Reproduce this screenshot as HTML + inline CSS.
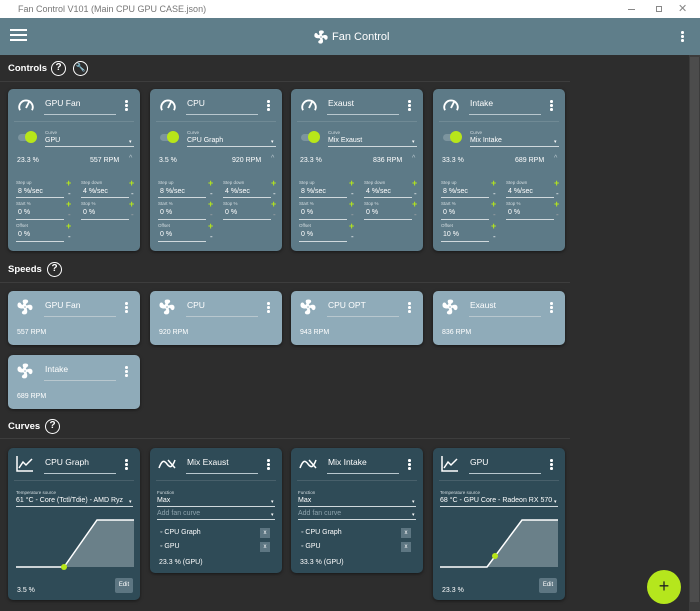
<!DOCTYPE html><html><head><meta charset="utf-8"><style>
*{margin:0;padding:0;box-sizing:border-box}
body{width:700px;height:611px;overflow:hidden;background:#2d2d2d;font-family:"Liberation Sans",sans-serif;color:#fff;position:relative}
.a{position:absolute}
.tb{left:0;top:0;width:700px;height:18px;background:#fff;color:#777;font-size:9px;line-height:18px;padding-left:18px}
.ab{left:0;top:18px;width:700px;height:37px;background:#5f7e8a}
.sb{left:689px;top:55px;width:11px;height:556px;background:#3c3c3c}
.sec{font-size:9.5px;font-weight:bold}
.hl{height:1px;background:#3d3d3d;left:0;width:570px}
.q{width:15px;height:15px;border:1.5px solid #fff;border-radius:50%;font-size:10px;text-align:center;line-height:12px;font-weight:bold}
.card{border-radius:5px;box-shadow:0 1px 3px rgba(0,0,0,.5)}
.c1{background:#5d7a87;width:132px;height:162px}
.c2{background:#8fabb9;width:132px;height:54px}
.c3{background:#2f4b57;width:132px}
.t{font-size:8.5px;left:37px;top:9px}
.ul{height:1px;background:#b8c7ce;left:36px;width:72px;top:25px}
.dots{left:117px;top:11px;width:3px;font-size:0}
.dots i{display:block;width:2.5px;height:2.5px;background:#fff;border-radius:50%;margin-bottom:1.5px}
.sep{left:6px;right:6px;height:1px;background:rgba(255,255,255,.12);top:32px}
.lb{font-size:4.5px;color:#d5dee2}
.v{font-size:7px}
.ln{height:1px;background:#d0d9dd}
.pl{color:#b4e61c;font-size:9px;font-weight:bold;line-height:9px}
.mn{font-size:8px;line-height:8px}
</style></head><body>
<div class="a tb">Fan Control V101 (Main CPU GPU CASE.json)</div>
<div class="a" style="left:656px;top:6px;width:6px;height:6px;border:1px solid #888"></div>
<div class="a" style="left:628px;top:9px;width:7px;height:1px;background:#888"></div>
<div class="a" style="left:678px;top:2px;font-size:11px;color:#888">✕</div>
<div class="a ab"></div>
<div class="a" style="left:10px;top:29px;width:17px;height:2px;background:#fff;box-shadow:0 5px 0 #fff,0 10px 0 #fff"></div>
<svg class="a" style="left:313px;top:29px" width="16" height="16" viewBox="0 0 24 24"><path fill="#fff" d="M12 11a1 1 0 1 0 0 2 1 1 0 0 0 0-2m.5-9c4.5 0 4.6 3.6 2.2 4.8-1 .5-1.4 1.4-1.6 2.3.5.2.9.5 1.2.9 3.7-2 7.7-1.2 7.7 2.4 0 4.5-3.6 4.6-4.8 2.2-.5-1-1.4-1.4-2.3-1.6-.2.5-.5.9-.9 1.2 2 3.7 1.2 7.7-2.4 7.7-4.5 0-4.6-3.6-2.2-4.8 1-.5 1.4-1.4 1.5-2.3-.5-.2-.9-.5-1.2-.9C6 14.2 2 13.4 2 9.8 2 5.3 5.6 5.2 6.8 7.6c.5 1 1.4 1.4 2.3 1.5.2-.5.5-.9.9-1.2C8 4.2 8.8 2 12.5 2z"/></svg>
<div class="a" style="left:332px;top:31px;font-size:11px">Fan Control</div>
<div class="a dots" style="left:681px;top:31px"><i></i><i></i><i></i></div>
<div class="a sb"></div>
<div class="a" style="left:690px;top:57px;width:9px;height:545px;background:#4c4c4c"></div>

<div class="a sec" style="left:8px;top:63px">Controls</div>
<div class="a q" style="left:51px;top:61px">?</div>
<div class="a q" style="left:73px;top:61px;font-size:8px">🔧</div>
<div class="a hl" style="top:81px"></div>
<div class="a sec" style="left:8px;top:264px">Speeds</div>
<div class="a q" style="left:47px;top:262px">?</div>
<div class="a hl" style="top:282px"></div>
<div class="a sec" style="left:8px;top:421px">Curves</div>
<div class="a q" style="left:45px;top:419px">?</div>
<div class="a hl" style="top:438px"></div>

<!-- card 1 -->
<div class="a card c1" style="left:8px;top:89px">
 <svg class="a" style="left:9px;top:8px" width="18" height="16" viewBox="0 0 24 20"><path d="M4 17A9 9 0 1 1 20 17" fill="none" stroke="#fff" stroke-width="2.5"/><path d="M12 14L16 6" stroke="#fff" stroke-width="2.5"/></svg>
 <div class="a t">GPU Fan</div><div class="a ul"></div><div class="a dots"><i></i><i></i><i></i></div><div class="a sep"></div>
 <div class="a" style="left:10px;top:45px;width:14px;height:7px;border-radius:4px;background:#7c949e"></div><div class="a" style="left:17px;top:42px;width:12px;height:12px;border-radius:50%;background:#b8e61a"></div>
 <div class="a lb" style="left:37px;top:41px">Curve</div><div class="a v" style="left:37px;top:48px">GPU</div><div class="a ln" style="left:37px;top:57px;width:89px"></div><div class="a" style="left:121px;top:50px;font-size:5px">▾</div>
 <div class="a v" style="left:9px;top:68px">23.3 %</div><div class="a v" style="left:82px;top:68px">557 RPM</div><div class="a v" style="left:121px;top:66px;color:#b8c7ce">^</div>
 <div class="a lb" style="left:8px;top:91px">Step up</div><div class="a pl" style="left:58px;top:90px">+</div><div class="a v" style="left:10px;top:99px">8 %/sec</div><div class="a mn" style="left:60px;top:101px">-</div><div class="a ln" style="left:8px;top:108px;width:48px"></div>
 <div class="a lb" style="left:73px;top:91px">Step down</div><div class="a pl" style="left:121px;top:90px">+</div><div class="a v" style="left:75px;top:99px">4 %/sec</div><div class="a mn" style="left:123px;top:101px">-</div><div class="a ln" style="left:73px;top:108px;width:48px"></div>
 <div class="a lb" style="left:8px;top:112px">Start %</div><div class="a pl" style="left:58px;top:111px">+</div><div class="a v" style="left:10px;top:120px">0 %</div><div class="a mn" style="left:60px;top:122px;color:#aaa">-</div><div class="a ln" style="left:8px;top:130px;width:48px"></div>
 <div class="a lb" style="left:73px;top:112px">Stop %</div><div class="a pl" style="left:121px;top:111px">+</div><div class="a v" style="left:75px;top:120px">0 %</div><div class="a mn" style="left:123px;top:122px;color:#aaa">-</div><div class="a ln" style="left:73px;top:130px;width:48px"></div>
 <div class="a lb" style="left:8px;top:134px">Offset</div><div class="a pl" style="left:58px;top:133px">+</div><div class="a v" style="left:10px;top:142px">0 %</div><div class="a mn" style="left:60px;top:144px">-</div><div class="a ln" style="left:8px;top:152px;width:48px"></div>
</div>
<!-- card 2 -->
<div class="a card c1" style="left:150px;top:89px">
 <svg class="a" style="left:9px;top:8px" width="18" height="16" viewBox="0 0 24 20"><path d="M4 17A9 9 0 1 1 20 17" fill="none" stroke="#fff" stroke-width="2.5"/><path d="M12 14L16 6" stroke="#fff" stroke-width="2.5"/></svg>
 <div class="a t">CPU</div><div class="a ul"></div><div class="a dots"><i></i><i></i><i></i></div><div class="a sep"></div>
 <div class="a" style="left:10px;top:45px;width:14px;height:7px;border-radius:4px;background:#7c949e"></div><div class="a" style="left:17px;top:42px;width:12px;height:12px;border-radius:50%;background:#b8e61a"></div>
 <div class="a lb" style="left:37px;top:41px">Curve</div><div class="a v" style="left:37px;top:48px">CPU Graph</div><div class="a ln" style="left:37px;top:57px;width:89px"></div><div class="a" style="left:121px;top:50px;font-size:5px">▾</div>
 <div class="a v" style="left:9px;top:68px">3.5 %</div><div class="a v" style="left:82px;top:68px">920 RPM</div><div class="a v" style="left:121px;top:66px;color:#b8c7ce">^</div>
 <div class="a lb" style="left:8px;top:91px">Step up</div><div class="a pl" style="left:58px;top:90px">+</div><div class="a v" style="left:10px;top:99px">8 %/sec</div><div class="a mn" style="left:60px;top:101px">-</div><div class="a ln" style="left:8px;top:108px;width:48px"></div>
 <div class="a lb" style="left:73px;top:91px">Step down</div><div class="a pl" style="left:121px;top:90px">+</div><div class="a v" style="left:75px;top:99px">4 %/sec</div><div class="a mn" style="left:123px;top:101px">-</div><div class="a ln" style="left:73px;top:108px;width:48px"></div>
 <div class="a lb" style="left:8px;top:112px">Start %</div><div class="a pl" style="left:58px;top:111px">+</div><div class="a v" style="left:10px;top:120px">0 %</div><div class="a mn" style="left:60px;top:122px;color:#aaa">-</div><div class="a ln" style="left:8px;top:130px;width:48px"></div>
 <div class="a lb" style="left:73px;top:112px">Stop %</div><div class="a pl" style="left:121px;top:111px">+</div><div class="a v" style="left:75px;top:120px">0 %</div><div class="a mn" style="left:123px;top:122px;color:#aaa">-</div><div class="a ln" style="left:73px;top:130px;width:48px"></div>
 <div class="a lb" style="left:8px;top:134px">Offset</div><div class="a pl" style="left:58px;top:133px">+</div><div class="a v" style="left:10px;top:142px">0 %</div><div class="a mn" style="left:60px;top:144px">-</div><div class="a ln" style="left:8px;top:152px;width:48px"></div>
</div>
<!-- card 3 -->
<div class="a card c1" style="left:291px;top:89px">
 <svg class="a" style="left:9px;top:8px" width="18" height="16" viewBox="0 0 24 20"><path d="M4 17A9 9 0 1 1 20 17" fill="none" stroke="#fff" stroke-width="2.5"/><path d="M12 14L16 6" stroke="#fff" stroke-width="2.5"/></svg>
 <div class="a t">Exaust</div><div class="a ul"></div><div class="a dots"><i></i><i></i><i></i></div><div class="a sep"></div>
 <div class="a" style="left:10px;top:45px;width:14px;height:7px;border-radius:4px;background:#7c949e"></div><div class="a" style="left:17px;top:42px;width:12px;height:12px;border-radius:50%;background:#b8e61a"></div>
 <div class="a lb" style="left:37px;top:41px">Curve</div><div class="a v" style="left:37px;top:48px">Mix Exaust</div><div class="a ln" style="left:37px;top:57px;width:89px"></div><div class="a" style="left:121px;top:50px;font-size:5px">▾</div>
 <div class="a v" style="left:9px;top:68px">23.3 %</div><div class="a v" style="left:82px;top:68px">836 RPM</div><div class="a v" style="left:121px;top:66px;color:#b8c7ce">^</div>
 <div class="a lb" style="left:8px;top:91px">Step up</div><div class="a pl" style="left:58px;top:90px">+</div><div class="a v" style="left:10px;top:99px">8 %/sec</div><div class="a mn" style="left:60px;top:101px">-</div><div class="a ln" style="left:8px;top:108px;width:48px"></div>
 <div class="a lb" style="left:73px;top:91px">Step down</div><div class="a pl" style="left:121px;top:90px">+</div><div class="a v" style="left:75px;top:99px">4 %/sec</div><div class="a mn" style="left:123px;top:101px">-</div><div class="a ln" style="left:73px;top:108px;width:48px"></div>
 <div class="a lb" style="left:8px;top:112px">Start %</div><div class="a pl" style="left:58px;top:111px">+</div><div class="a v" style="left:10px;top:120px">0 %</div><div class="a mn" style="left:60px;top:122px;color:#aaa">-</div><div class="a ln" style="left:8px;top:130px;width:48px"></div>
 <div class="a lb" style="left:73px;top:112px">Stop %</div><div class="a pl" style="left:121px;top:111px">+</div><div class="a v" style="left:75px;top:120px">0 %</div><div class="a mn" style="left:123px;top:122px;color:#aaa">-</div><div class="a ln" style="left:73px;top:130px;width:48px"></div>
 <div class="a lb" style="left:8px;top:134px">Offset</div><div class="a pl" style="left:58px;top:133px">+</div><div class="a v" style="left:10px;top:142px">0 %</div><div class="a mn" style="left:60px;top:144px">-</div><div class="a ln" style="left:8px;top:152px;width:48px"></div>
</div>
<!-- card 4 -->
<div class="a card c1" style="left:433px;top:89px">
 <svg class="a" style="left:9px;top:8px" width="18" height="16" viewBox="0 0 24 20"><path d="M4 17A9 9 0 1 1 20 17" fill="none" stroke="#fff" stroke-width="2.5"/><path d="M12 14L16 6" stroke="#fff" stroke-width="2.5"/></svg>
 <div class="a t">Intake</div><div class="a ul"></div><div class="a dots"><i></i><i></i><i></i></div><div class="a sep"></div>
 <div class="a" style="left:10px;top:45px;width:14px;height:7px;border-radius:4px;background:#7c949e"></div><div class="a" style="left:17px;top:42px;width:12px;height:12px;border-radius:50%;background:#b8e61a"></div>
 <div class="a lb" style="left:37px;top:41px">Curve</div><div class="a v" style="left:37px;top:48px">Mix Intake</div><div class="a ln" style="left:37px;top:57px;width:89px"></div><div class="a" style="left:121px;top:50px;font-size:5px">▾</div>
 <div class="a v" style="left:9px;top:68px">33.3 %</div><div class="a v" style="left:82px;top:68px">689 RPM</div><div class="a v" style="left:121px;top:66px;color:#b8c7ce">^</div>
 <div class="a lb" style="left:8px;top:91px">Step up</div><div class="a pl" style="left:58px;top:90px">+</div><div class="a v" style="left:10px;top:99px">8 %/sec</div><div class="a mn" style="left:60px;top:101px">-</div><div class="a ln" style="left:8px;top:108px;width:48px"></div>
 <div class="a lb" style="left:73px;top:91px">Step down</div><div class="a pl" style="left:121px;top:90px">+</div><div class="a v" style="left:75px;top:99px">4 %/sec</div><div class="a mn" style="left:123px;top:101px">-</div><div class="a ln" style="left:73px;top:108px;width:48px"></div>
 <div class="a lb" style="left:8px;top:112px">Start %</div><div class="a pl" style="left:58px;top:111px">+</div><div class="a v" style="left:10px;top:120px">0 %</div><div class="a mn" style="left:60px;top:122px;color:#aaa">-</div><div class="a ln" style="left:8px;top:130px;width:48px"></div>
 <div class="a lb" style="left:73px;top:112px">Stop %</div><div class="a pl" style="left:121px;top:111px">+</div><div class="a v" style="left:75px;top:120px">0 %</div><div class="a mn" style="left:123px;top:122px;color:#aaa">-</div><div class="a ln" style="left:73px;top:130px;width:48px"></div>
 <div class="a lb" style="left:8px;top:134px">Offset</div><div class="a pl" style="left:58px;top:133px">+</div><div class="a v" style="left:10px;top:142px">10 %</div><div class="a mn" style="left:60px;top:144px">-</div><div class="a ln" style="left:8px;top:152px;width:48px"></div>
</div>

<!-- speeds -->
<svg width="0" height="0" style="position:absolute"><defs><path id="fan" fill="#fff" d="M12 11a1 1 0 1 0 0 2 1 1 0 0 0 0-2m.5-9c4.5 0 4.6 3.6 2.2 4.8-1 .5-1.4 1.4-1.6 2.3.5.2.9.5 1.2.9 3.7-2 7.7-1.2 7.7 2.4 0 4.5-3.6 4.6-4.8 2.2-.5-1-1.4-1.4-2.3-1.6-.2.5-.5.9-.9 1.2 2 3.7 1.2 7.7-2.4 7.7-4.5 0-4.6-3.6-2.2-4.8 1-.5 1.4-1.4 1.5-2.3-.5-.2-.9-.5-1.2-.9C6 14.2 2 13.4 2 9.8 2 5.3 5.6 5.2 6.8 7.6c.5 1 1.4 1.4 2.3 1.5.2-.5.5-.9.9-1.2C8 4.2 8.8 2 12.5 2z"/></defs></svg>
<div class="a card c2" style="left:8px;top:291px"><svg class="a" style="left:8px;top:7px" width="18" height="18" viewBox="0 0 24 24"><use href="#fan"/></svg><div class="a t">GPU Fan</div><div class="a ul"></div><div class="a dots"><i></i><i></i><i></i></div><div class="a v" style="left:9px;top:38px">557 RPM</div></div>
<div class="a card c2" style="left:150px;top:291px"><svg class="a" style="left:8px;top:7px" width="18" height="18" viewBox="0 0 24 24"><use href="#fan"/></svg><div class="a t">CPU</div><div class="a ul"></div><div class="a dots"><i></i><i></i><i></i></div><div class="a v" style="left:9px;top:38px">920 RPM</div></div>
<div class="a card c2" style="left:291px;top:291px"><svg class="a" style="left:8px;top:7px" width="18" height="18" viewBox="0 0 24 24"><use href="#fan"/></svg><div class="a t">CPU OPT</div><div class="a ul"></div><div class="a dots"><i></i><i></i><i></i></div><div class="a v" style="left:9px;top:38px">943 RPM</div></div>
<div class="a card c2" style="left:433px;top:291px"><svg class="a" style="left:8px;top:7px" width="18" height="18" viewBox="0 0 24 24"><use href="#fan"/></svg><div class="a t">Exaust</div><div class="a ul"></div><div class="a dots"><i></i><i></i><i></i></div><div class="a v" style="left:9px;top:38px">836 RPM</div></div>
<div class="a card c2" style="left:8px;top:355px"><svg class="a" style="left:8px;top:7px" width="18" height="18" viewBox="0 0 24 24"><use href="#fan"/></svg><div class="a t">Intake</div><div class="a ul"></div><div class="a dots"><i></i><i></i><i></i></div><div class="a v" style="left:9px;top:38px">689 RPM</div></div>

<!-- curves -->
<div class="a card c3" style="left:8px;top:448px;height:152px">
 <svg class="a" style="left:8px;top:8px" width="18" height="16" viewBox="0 0 18 16"><path d="M1 0V15H17M3 12L7 6 10 9 16 3" fill="none" stroke="#fff" stroke-width="1.5"/></svg>
 <div class="a t">CPU Graph</div><div class="a ul"></div><div class="a dots"><i></i><i></i><i></i></div><div class="a sep"></div>
 <div class="a lb" style="left:8px;top:42px">Temperature source</div><div class="a v" style="left:8px;top:49px">61 °C - Core (Tctl/Tdie) - AMD Ryz</div><div class="a" style="left:121px;top:51px;font-size:5px">▾</div><div class="a ln" style="left:8px;top:58px;width:117px"></div>
 <svg class="a" style="left:8px;top:60px" width="118" height="62"><path d="M48 59L81 12H118V59Z" fill="#6a8089"/><path d="M0 59H48L81 12H118" fill="none" stroke="#fff" stroke-width="1.5"/><circle cx="48" cy="59" r="3" fill="#b8e61a"/></svg>
 <div class="a v" style="left:9px;top:139px">3.5 %</div>
 <div class="a" style="left:107px;top:130px;width:18px;height:15px;background:#5d7682;border-radius:2px;font-size:6px;text-align:center;line-height:15px">Edit</div>
</div>
<div class="a card c3" style="left:150px;top:448px;height:125px">
 <svg class="a" style="left:8px;top:10px" width="18" height="12" viewBox="0 0 18 12"><path d="M1 10C4 2 6 2 9 6S14 10 17 2M10 2L17 10" fill="none" stroke="#fff" stroke-width="1.5"/></svg>
 <div class="a t">Mix Exaust</div><div class="a ul"></div><div class="a dots"><i></i><i></i><i></i></div><div class="a sep"></div>
 <div class="a lb" style="left:7px;top:42px">Function</div><div class="a v" style="left:7px;top:49px">Max</div><div class="a" style="left:121px;top:51px;font-size:5px">▾</div><div class="a ln" style="left:7px;top:58px;width:118px"></div>
 <div class="a v" style="left:7px;top:62px;color:#8da3ad">Add fan curve</div><div class="a" style="left:121px;top:64px;font-size:5px">▾</div><div class="a ln" style="left:7px;top:71px;width:118px"></div>
 <div class="a v" style="left:10px;top:81px">◦ CPU Graph</div><div class="a" style="left:110px;top:80px;width:10px;height:10px;background:#5d7682;font-size:6px;text-align:center;line-height:10px">x</div>
 <div class="a v" style="left:10px;top:95px">◦ GPU</div><div class="a" style="left:110px;top:94px;width:10px;height:10px;background:#5d7682;font-size:6px;text-align:center;line-height:10px">x</div>
 <div class="a v" style="left:9px;top:111px">23.3 % (GPU)</div>
</div>
<div class="a card c3" style="left:291px;top:448px;height:125px">
 <svg class="a" style="left:8px;top:10px" width="18" height="12" viewBox="0 0 18 12"><path d="M1 10C4 2 6 2 9 6S14 10 17 2M10 2L17 10" fill="none" stroke="#fff" stroke-width="1.5"/></svg>
 <div class="a t">Mix Intake</div><div class="a ul"></div><div class="a dots"><i></i><i></i><i></i></div><div class="a sep"></div>
 <div class="a lb" style="left:7px;top:42px">Function</div><div class="a v" style="left:7px;top:49px">Max</div><div class="a" style="left:121px;top:51px;font-size:5px">▾</div><div class="a ln" style="left:7px;top:58px;width:118px"></div>
 <div class="a v" style="left:7px;top:62px;color:#8da3ad">Add fan curve</div><div class="a" style="left:121px;top:64px;font-size:5px">▾</div><div class="a ln" style="left:7px;top:71px;width:118px"></div>
 <div class="a v" style="left:10px;top:81px">◦ CPU Graph</div><div class="a" style="left:110px;top:80px;width:10px;height:10px;background:#5d7682;font-size:6px;text-align:center;line-height:10px">x</div>
 <div class="a v" style="left:10px;top:95px">◦ GPU</div><div class="a" style="left:110px;top:94px;width:10px;height:10px;background:#5d7682;font-size:6px;text-align:center;line-height:10px">x</div>
 <div class="a v" style="left:9px;top:111px">33.3 % (GPU)</div>
</div>
<div class="a card c3" style="left:433px;top:448px;height:152px">
 <svg class="a" style="left:8px;top:8px" width="18" height="16" viewBox="0 0 18 16"><path d="M1 0V15H17M3 12L7 6 10 9 16 3" fill="none" stroke="#fff" stroke-width="1.5"/></svg>
 <div class="a t">GPU</div><div class="a ul"></div><div class="a dots"><i></i><i></i><i></i></div><div class="a sep"></div>
 <div class="a lb" style="left:7px;top:42px">Temperature source</div><div class="a v" style="left:7px;top:49px">68 °C - GPU Core - Radeon RX 570</div><div class="a" style="left:121px;top:51px;font-size:5px">▾</div><div class="a ln" style="left:7px;top:58px;width:118px"></div>
 <svg class="a" style="left:7px;top:60px" width="118" height="62"><path d="M47 59L82 12H118V59Z" fill="#6a8089"/><path d="M0 59H47L82 12H118" fill="none" stroke="#fff" stroke-width="1.5"/><circle cx="55" cy="48" r="3" fill="#b8e61a"/></svg>
 <div class="a v" style="left:9px;top:139px">23.3 %</div>
 <div class="a" style="left:106px;top:130px;width:18px;height:15px;background:#5d7682;border-radius:2px;font-size:6px;text-align:center;line-height:15px">Edit</div>
</div>

<div class="a" style="left:647px;top:570px;width:34px;height:34px;border-radius:50%;background:#b5e61d;color:#222;font-size:18px;text-align:center;line-height:33px">+</div>
</body></html>
